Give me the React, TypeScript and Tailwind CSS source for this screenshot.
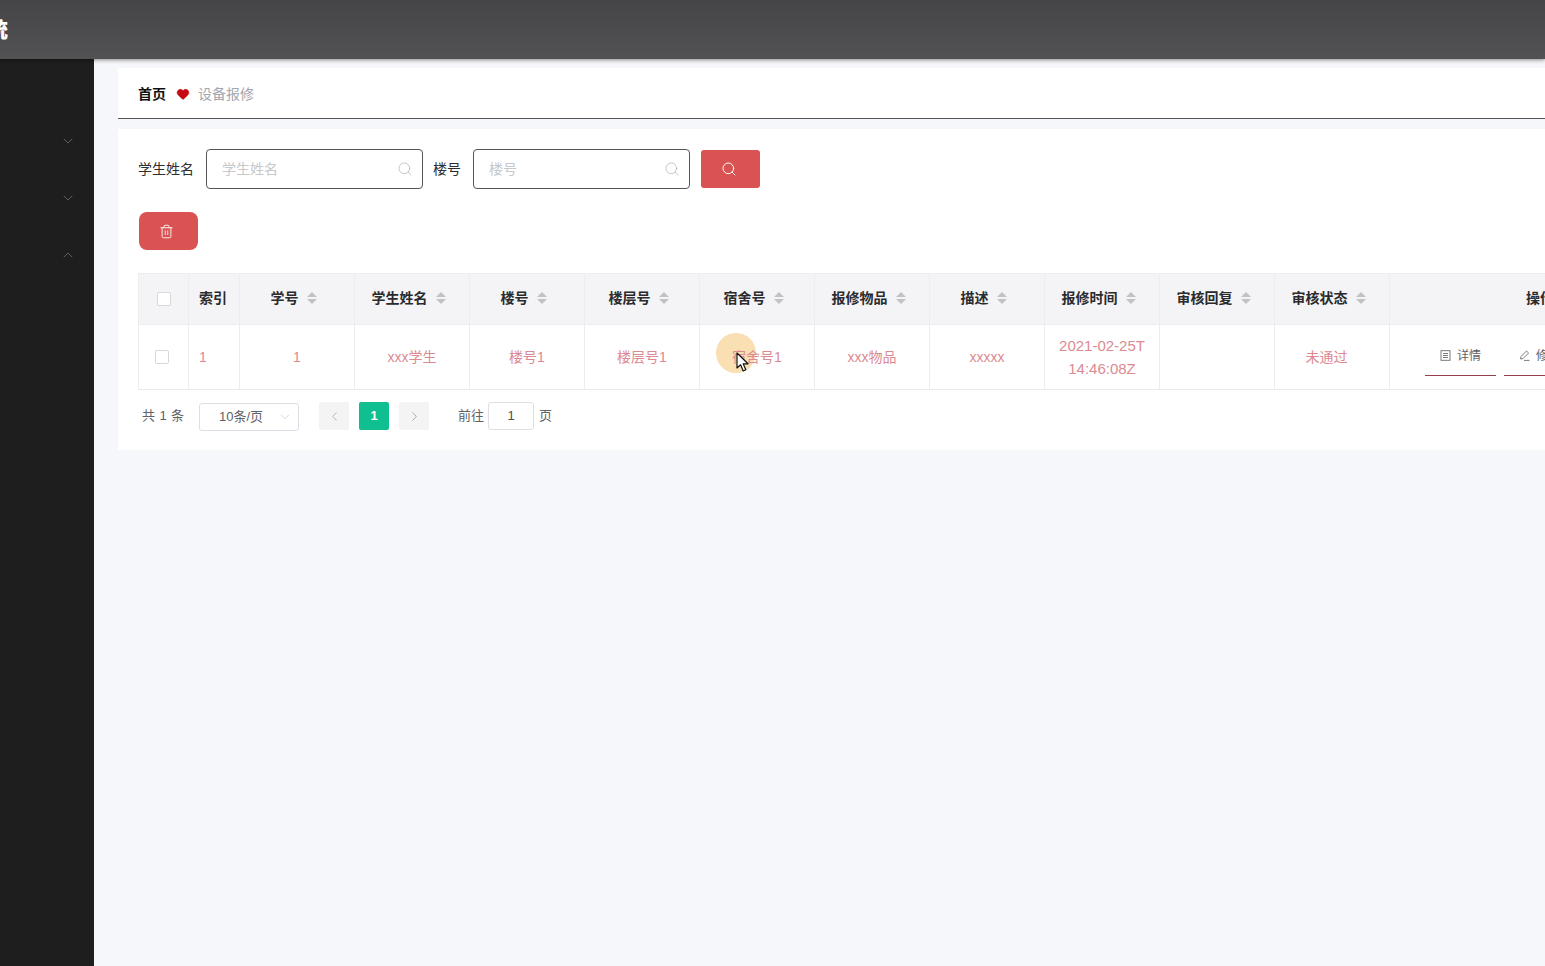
import { ChevronDown, ChevronLeft, ChevronRight, ChevronUp, Heart, Search, Trash2 } from "lucide-react";

const FONT = "font-['Liberation_Sans','Noto_Sans_CJK_SC',sans-serif]";

const COLUMNS = ["学号", "学生姓名", "楼号", "楼层号", "宿舍号", "报修物品", "描述", "报修时间", "审核回复", "审核状态"];

const CELLS = ["1", "xxx学生", "楼号1", "楼层号1", "宿舍号1", "xxx物品", "xxxxx", "2021-02-25T 14:46:08Z", "", "未通过"];

function SortCaret() {
  return (
    <svg width="10" height="14" viewBox="0 0 10 14" className="ml-[8px] inline-block shrink-0">
      <path d="M5 1 L10 6 H0 Z" fill="#c0c2c7" />
      <path d="M5 13 L10 8 H0 Z" fill="#c0c2c7" />
    </svg>
  );
}

function SearchInput({ placeholder }: { placeholder: string }) {
  return (
    <div className="flex h-[40px] w-[217px] items-center justify-between rounded-[4px] border border-[#55555a] bg-white pl-[15px] pr-[9px]">
      <span className="text-[14px] text-[#c6c8cc]">{placeholder}</span>
      <Search className="h-[16px] w-[16px] text-[#b5b7bb]" strokeWidth={1.2} />
    </div>
  );
}

function ActionButton({ label, icon }: { label: string; icon: React.ReactNode }) {
  return (
    <div className="flex h-[38px] w-[71px] shrink-0 items-center justify-center gap-[6px] border-b border-[#96404c] pb-[2px] text-[12px] text-[#5f6165]">
      {icon}
      <span>{label}</span>
    </div>
  );
}

function Sidebar() {
  return (
    <aside className="flex w-[94px] shrink-0 flex-col items-end bg-[#1e1e1f] pr-[18px] pt-[74px] text-[#757577]">
      <ChevronDown className="h-[16px] w-[16px]" strokeWidth={1.1} />
      <ChevronDown className="mt-[41px] h-[16px] w-[16px]" strokeWidth={1.1} />
      <ChevronUp className="mt-[41px] h-[16px] w-[16px]" strokeWidth={1.1} />
    </aside>
  );
}

function RepairTable() {
  return (
    <table className="w-[1590px] table-fixed border-collapse">
      <colgroup>
        <col className="w-[50px]" />
        <col className="w-[51px]" />
        {COLUMNS.map((c) => (
          <col key={c} className="w-[115px]" />
        ))}
        <col />
      </colgroup>
      <thead>
        <tr className="h-[51px] border-y border-[#ebedf0] bg-[#f4f4f7] text-[14px] font-bold text-[#2b2b2e]">
          <th className="border-x border-[#ebedf0] pb-[2px]">
            <span className="ml-[1px] inline-block h-[14px] w-[14px] rounded-[2px] border border-[#d6d8dc] bg-white align-middle" />
          </th>
          <th className="border-r border-[#ebedf0] pb-[2px] pr-[2px]">索引</th>
          {COLUMNS.map((c) => (
            <th key={c} className="border-r border-[#ebedf0] pb-[2px] pr-[7px]">
              <span className="inline-flex items-center justify-center">
                {c}
                <SortCaret />
              </span>
            </th>
          ))}
          <th className="pb-[2px] pl-[136px] text-left">操作</th>
        </tr>
      </thead>
      <tbody>
        <tr className="h-[65px] border-b border-[#e8e9ec] text-center text-[14px] text-[#dc8a92]">
          <td className="border-x border-[#ebedf0] pb-[2px] pr-[3px]">
            <span className="inline-block h-[14px] w-[14px] rounded-[2px] border border-[#d6d8dc] bg-white align-middle" />
          </td>
          <td className="border-r border-[#ebedf0] pl-[10px] text-left">1</td>
          {CELLS.map((c, i) => (
            <td
              key={i}
              className={`relative border-r border-[#ebedf0] leading-[23px] ${i === 7 ? "px-[5px] text-[15px]" : i === 9 ? "pl-[5px] pr-[16px]" : "px-[10px]"}`}
            >
              {i === 4 && (
                <span className="absolute left-[16px] top-[8px] h-[40px] w-[40px] rounded-full bg-[#f9dfb2]" />
              )}
              <span className="relative">{c}</span>
              {i === 4 && (
                <svg width="14" height="21" viewBox="0 0 14 21" className="absolute left-[36px] top-[27px]">
                  <path d="M1 1 V16 L4.6 12.8 L7.2 19 L9.8 17.8 L7.2 11.8 H12 Z" fill="#fff" stroke="#111" strokeWidth="1.2" strokeLinejoin="round" />
                </svg>
              )}
            </td>
          ))}
          <td>
            <div className="flex items-center gap-[8px] pl-[35px]">
              <ActionButton
                label="详情"
                icon={
                  <svg width="11" height="11" viewBox="0 0 11 11" fill="none" stroke="#6a6c70" strokeWidth="0.9">
                    <rect x="1" y="0.7" width="9" height="9.6" />
                    <path d="M3 3.5 H8 M3 5.5 H8 M3 7.5 H8" />
                  </svg>
                }
              />
              <ActionButton
                label="修改"
                icon={
                  <svg width="11" height="11" viewBox="0 0 11 11" fill="none" stroke="#6a6c70" strokeWidth="0.9">
                    <path d="M7.5 1 L9.6 3 L4 8.6 L1.6 9 L2 6.6 Z" />
                    <path d="M5 10.4 H10.5" />
                  </svg>
                }
              />
            </div>
          </td>
        </tr>
      </tbody>
    </table>
  );
}

function Pagination() {
  return (
    <div className="mt-[12px] flex h-[28px] items-center text-[13px] text-[#606266]">
      <span className="ml-[4px] w-[57px] tracking-[0.4px]">共 1 条</span>
      <div className="mt-[1px] flex h-[28px] w-[100px] items-center justify-between rounded-[3px] border border-[#dcdfe6] pl-[19px] pr-[6px]">
        <span>10条/页</span>
        <ChevronDown className="h-[14px] w-[14px] text-[#c0c4cc]" strokeWidth={1.2} />
      </div>
      <div className="ml-[20px] flex h-[28px] w-[30px] items-center justify-center rounded-[2px] bg-[#f4f4f5] text-[#b6b8bd]">
        <ChevronLeft className="h-[15px] w-[15px]" strokeWidth={1.6} />
      </div>
      <div className="ml-[10px] flex h-[28px] w-[30px] items-center justify-center rounded-[2px] bg-[#0fbf8f] font-bold text-white">1</div>
      <div className="ml-[10px] flex h-[28px] w-[30px] items-center justify-center rounded-[2px] bg-[#f4f4f5] text-[#a8aaaf]">
        <ChevronRight className="h-[15px] w-[15px]" strokeWidth={1.6} />
      </div>
      <span className="ml-[29px]">前往</span>
      <div className="ml-[4px] flex h-[28px] w-[46px] items-center justify-center rounded-[3px] border border-[#dcdfe6] text-[#4c4e52]">1</div>
      <span className="ml-[5px]">页</span>
    </div>
  );
}

export default function App() {
  return (
    <div className={`flex h-[966px] w-[1545px] flex-col overflow-hidden bg-[#f6f7fb] ${FONT}`}>
      {/* Header */}
      <header className="z-10 flex h-[59px] shrink-0 items-center overflow-hidden bg-gradient-to-b from-[#454446] to-[#525153] shadow-[0_1px_4px_rgba(0,0,0,0.45)]">
        <span className="ml-[-13px] text-[21px] font-black text-white">统</span>
      </header>

      <div className="flex min-h-0 flex-1">
        <Sidebar />

        <main className="min-w-0 flex-1 pl-[24px] pt-[9px]">
          {/* Breadcrumb */}
          <div className="flex h-[51px] items-center border-b border-[#55555a] bg-white pl-[20px] pt-[2px] text-[14px]">
            <span className="font-bold text-[#111]">首页</span>
            <Heart className="ml-[10px] h-[14px] w-[14px] text-[#c40a12]" fill="#c40a12" strokeWidth={1} />
            <span className="ml-[8px] text-[#a2a6ae]">设备报修</span>
          </div>

          <section className="mt-[10px] h-[321px] overflow-hidden bg-white pl-[20px] pt-[20px]">
            <div className="flex items-center text-[14px] text-[#2f2f32]">
              <span className="w-[68px]">学生姓名</span>
              <SearchInput placeholder="学生姓名" />
              <span className="ml-[10px] w-[40px]">楼号</span>
              <SearchInput placeholder="楼号" />
              <div className="ml-[11px] flex h-[38px] w-[59px] items-center justify-center rounded-[3px] bg-[#d95353] pr-[4px] text-white">
                <Search className="h-[16px] w-[16px]" strokeWidth={1.5} />
              </div>
            </div>

            <div className="ml-[1px] mt-[23px] flex h-[38px] w-[59px] items-center justify-center rounded-[8px] bg-[#d95353] pr-[4px] text-white">
              <Trash2 className="h-[15px] w-[15px]" strokeWidth={1.4} />
            </div>

            <div className="mt-[23px]">
              <RepairTable />
            </div>

            <Pagination />
          </section>
        </main>
      </div>
    </div>
  );
}
